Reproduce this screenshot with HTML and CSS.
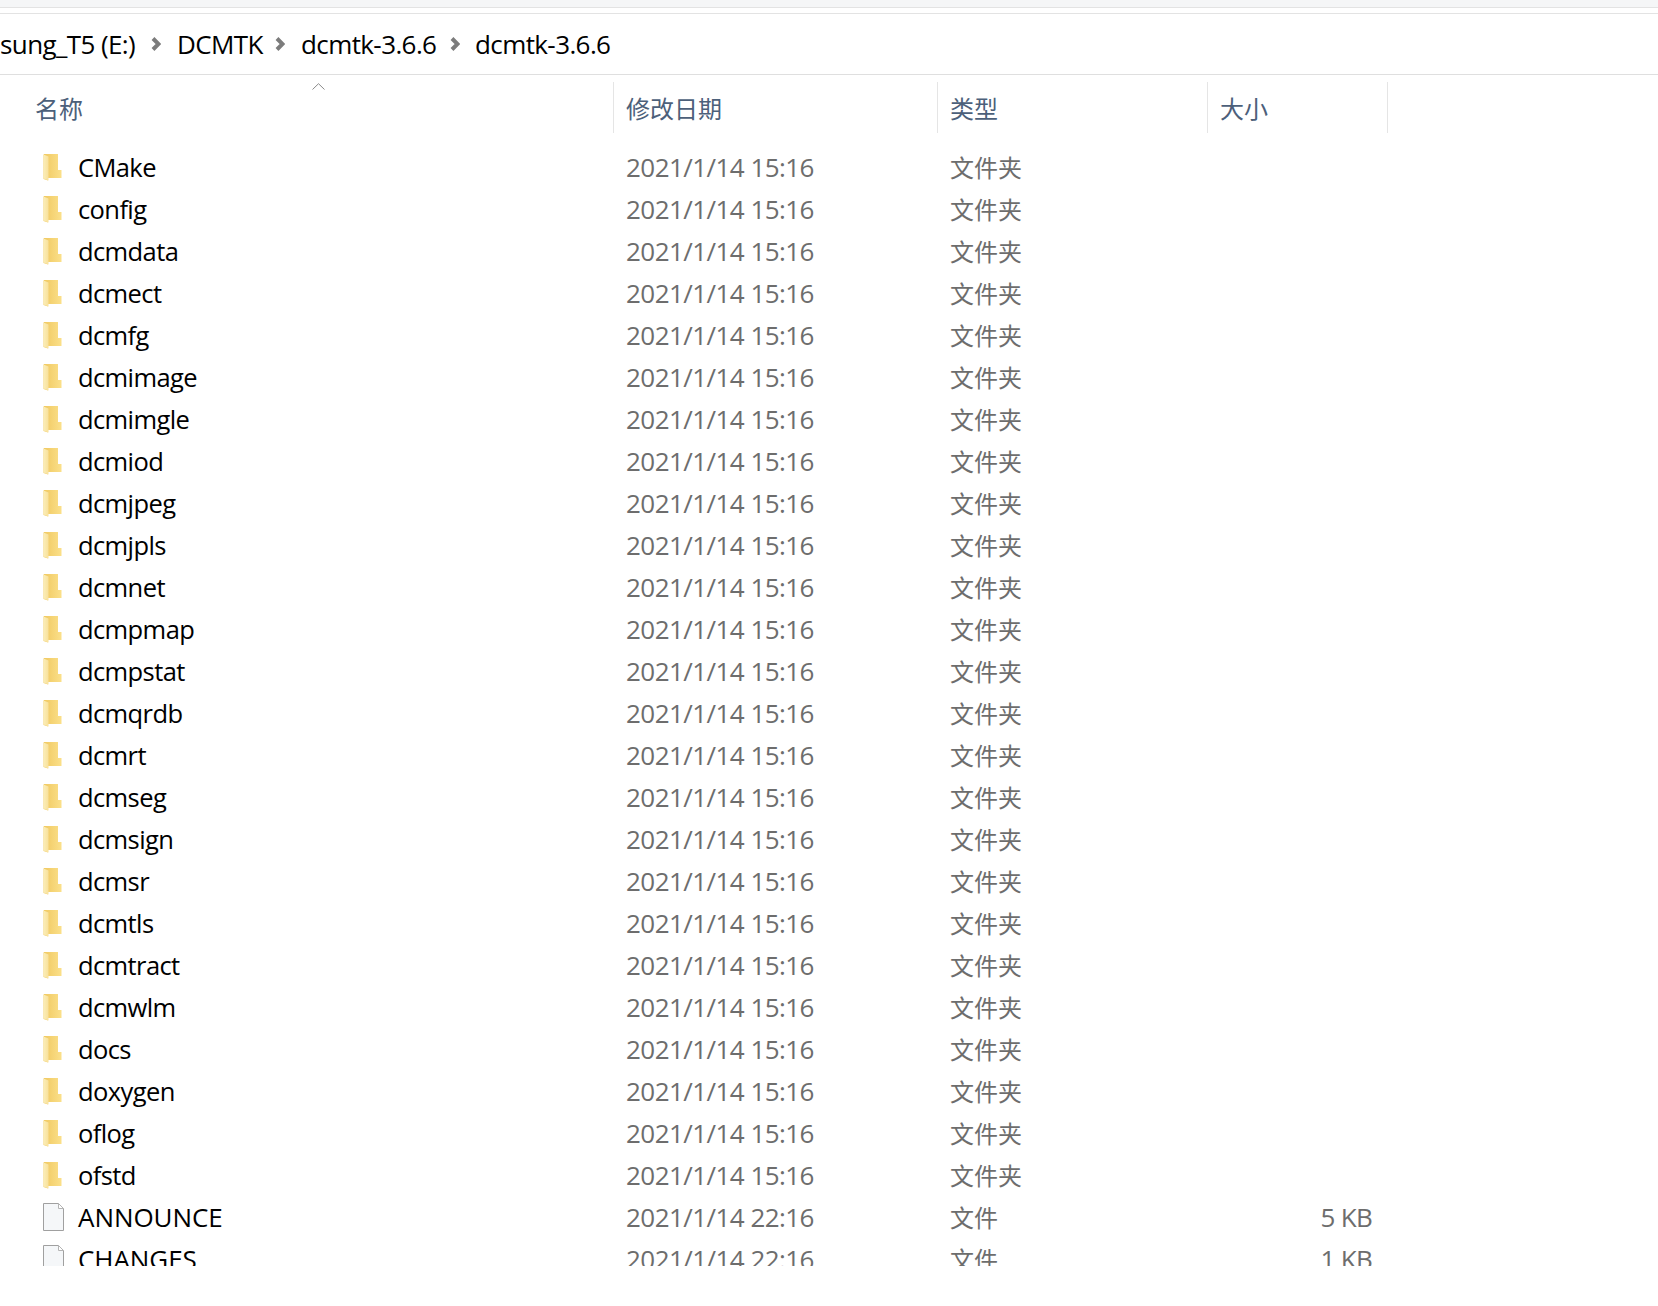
FILE: index.html
```html
<!DOCTYPE html>
<html lang="zh-CN">
<head>
<meta charset="utf-8">
<title>dcmtk-3.6.6</title>
<link rel="stylesheet" href="styles.css">
</head>
<body>
<svg class="defs" width="0" height="0" aria-hidden="true">
  <defs>
    <linearGradient id="fg" x1="0" x2="1" y1="0" y2="0"><stop offset="0" stop-color="#f0c860"/><stop offset="1" stop-color="#fbe08a"/></linearGradient>
    <linearGradient id="fl" x1="0" x2="1" y1="0" y2="0"><stop offset="0" stop-color="#fbeeb8"/><stop offset="1" stop-color="#f8e09a"/></linearGradient>
    <symbol id="folder" viewBox="0 0 19 27">
      <path d="M1 0H15V16H18.500V24H5V26.500L0.500 25V1Z" fill="url(#fg)"/>
      <path d="M0.500 0.500L5.500 2.500V26.500L0.500 24.500Z" fill="url(#fl)"/>
    </symbol>
    <symbol id="file" viewBox="0 0 21 28">
      <path d="M0.500 0.500H15.500L20.500 5.500V27.500H0.500Z" fill="#f5f7f9" stroke="#a0a0a0"/>
      <path d="M15.500 0.500V5.500H20.500Z" fill="#fff" stroke="#b4b4b4"/>
    </symbol>
    <symbol id="chev" viewBox="0 0 10 14">
      <path d="M2 1.500L7.500 7L2 12.500" fill="none" stroke="#7c7c7c" stroke-width="4"/>
    </symbol>
  </defs>
</svg>
<div class="topband"></div>
<nav class="crumbs">
  <span class="crumb c1">sung_T5 (E:)</span><svg class="chev"><use href="#chev"/></svg>
  <span class="crumb c2">DCMTK</span><svg class="chev"><use href="#chev"/></svg>
  <span class="crumb c3">dcmtk-3.6.6</span><svg class="chev"><use href="#chev"/></svg>
  <span class="crumb">dcmtk-3.6.6</span>
</nav>
<div class="cols head">
  <div class="hcell first">名称<svg class="sort" viewBox="0 0 13 7"><path d="M0.500 6.500L6.500 0.700L12.500 6.500" fill="none" stroke="#8a8a8a"/></svg></div>
  <div class="hcell">修改日期</div>
  <div class="hcell">类型</div>
  <div class="hcell">大小</div>
</div>
<main class="list">
<div class="cols row"><div class="name"><svg class="ico"><use href="#folder"/></svg>CMake</div><div class="date">2021/1/14 15:16</div><div class="type">文件夹</div></div>
<div class="cols row"><div class="name"><svg class="ico"><use href="#folder"/></svg>config</div><div class="date">2021/1/14 15:16</div><div class="type">文件夹</div></div>
<div class="cols row"><div class="name"><svg class="ico"><use href="#folder"/></svg>dcmdata</div><div class="date">2021/1/14 15:16</div><div class="type">文件夹</div></div>
<div class="cols row"><div class="name"><svg class="ico"><use href="#folder"/></svg>dcmect</div><div class="date">2021/1/14 15:16</div><div class="type">文件夹</div></div>
<div class="cols row"><div class="name"><svg class="ico"><use href="#folder"/></svg>dcmfg</div><div class="date">2021/1/14 15:16</div><div class="type">文件夹</div></div>
<div class="cols row"><div class="name"><svg class="ico"><use href="#folder"/></svg>dcmimage</div><div class="date">2021/1/14 15:16</div><div class="type">文件夹</div></div>
<div class="cols row"><div class="name"><svg class="ico"><use href="#folder"/></svg>dcmimgle</div><div class="date">2021/1/14 15:16</div><div class="type">文件夹</div></div>
<div class="cols row"><div class="name"><svg class="ico"><use href="#folder"/></svg>dcmiod</div><div class="date">2021/1/14 15:16</div><div class="type">文件夹</div></div>
<div class="cols row"><div class="name"><svg class="ico"><use href="#folder"/></svg>dcmjpeg</div><div class="date">2021/1/14 15:16</div><div class="type">文件夹</div></div>
<div class="cols row"><div class="name"><svg class="ico"><use href="#folder"/></svg>dcmjpls</div><div class="date">2021/1/14 15:16</div><div class="type">文件夹</div></div>
<div class="cols row"><div class="name"><svg class="ico"><use href="#folder"/></svg>dcmnet</div><div class="date">2021/1/14 15:16</div><div class="type">文件夹</div></div>
<div class="cols row"><div class="name"><svg class="ico"><use href="#folder"/></svg>dcmpmap</div><div class="date">2021/1/14 15:16</div><div class="type">文件夹</div></div>
<div class="cols row"><div class="name"><svg class="ico"><use href="#folder"/></svg>dcmpstat</div><div class="date">2021/1/14 15:16</div><div class="type">文件夹</div></div>
<div class="cols row"><div class="name"><svg class="ico"><use href="#folder"/></svg>dcmqrdb</div><div class="date">2021/1/14 15:16</div><div class="type">文件夹</div></div>
<div class="cols row"><div class="name"><svg class="ico"><use href="#folder"/></svg>dcmrt</div><div class="date">2021/1/14 15:16</div><div class="type">文件夹</div></div>
<div class="cols row"><div class="name"><svg class="ico"><use href="#folder"/></svg>dcmseg</div><div class="date">2021/1/14 15:16</div><div class="type">文件夹</div></div>
<div class="cols row"><div class="name"><svg class="ico"><use href="#folder"/></svg>dcmsign</div><div class="date">2021/1/14 15:16</div><div class="type">文件夹</div></div>
<div class="cols row"><div class="name"><svg class="ico"><use href="#folder"/></svg>dcmsr</div><div class="date">2021/1/14 15:16</div><div class="type">文件夹</div></div>
<div class="cols row"><div class="name"><svg class="ico"><use href="#folder"/></svg>dcmtls</div><div class="date">2021/1/14 15:16</div><div class="type">文件夹</div></div>
<div class="cols row"><div class="name"><svg class="ico"><use href="#folder"/></svg>dcmtract</div><div class="date">2021/1/14 15:16</div><div class="type">文件夹</div></div>
<div class="cols row"><div class="name"><svg class="ico"><use href="#folder"/></svg>dcmwlm</div><div class="date">2021/1/14 15:16</div><div class="type">文件夹</div></div>
<div class="cols row"><div class="name"><svg class="ico"><use href="#folder"/></svg>docs</div><div class="date">2021/1/14 15:16</div><div class="type">文件夹</div></div>
<div class="cols row"><div class="name"><svg class="ico"><use href="#folder"/></svg>doxygen</div><div class="date">2021/1/14 15:16</div><div class="type">文件夹</div></div>
<div class="cols row"><div class="name"><svg class="ico"><use href="#folder"/></svg>oflog</div><div class="date">2021/1/14 15:16</div><div class="type">文件夹</div></div>
<div class="cols row"><div class="name"><svg class="ico"><use href="#folder"/></svg>ofstd</div><div class="date">2021/1/14 15:16</div><div class="type">文件夹</div></div>
<div class="cols row"><div class="name caps"><svg class="ico fileico"><use href="#file"/></svg>ANNOUNCE</div><div class="date">2021/1/14 22:16</div><div class="type">文件</div><div class="size">5 KB</div></div>
<div class="cols row"><div class="name caps"><svg class="ico fileico"><use href="#file"/></svg>CHANGES</div><div class="date">2021/1/14 22:16</div><div class="type">文件</div><div class="size">1 KB</div></div>
</main>
</body>
</html>
```

FILE: styles.css
```css
* { box-sizing: border-box; }
html, body { margin: 0; background: #fff; }
body {
  width: 1658px;
  height: 1306px;
  overflow: hidden;
  font-family: "Open Sans", "Noto Sans CJK SC", sans-serif;
  font-size: 26px;
  color: #000;
}
.defs { display: block; height: 0; }
.topband {
  height: 14px;
  background: linear-gradient(#f5f6f7 0, #f5f6f7 7px, #e3e3e3 7px, #e3e3e3 8px, #fff 8px, #fff 13px, #e3e3e3 13px);
}
.crumbs {
  height: 61px;
  border-bottom: 1px solid #dfdfdf;
  display: flex;
  align-items: center;
  white-space: nowrap;
  letter-spacing: -0.6px;
}
.crumb { display: block; }
.c1 { width: 151px; }
.c2 { width: 98px; }
.c3 { width: 149px; }
.chev { width: 10px; height: 14px; margin-right: 16px; flex: none; margin-bottom: 1px; }
.c3 + .chev { margin-right: 15px; }
.cols {
  display: grid;
  grid-template-columns: 614px 324px 270px 180px;
}
.head { height: 51px; margin-top: 7px; }
.hcell {
  font-family: "Noto Sans CJK SC", sans-serif;
  font-size: 24px;
  color: #4c607a;
  padding-left: 12px;
  border-right: 1px solid #e5e5e5;
  line-height: 51px;
}
.hcell.first { padding-left: 35px; position: relative; }
.sort { position: absolute; left: 312px; top: 1px; width: 13px; height: 7px; }
.list {
  height: 1133px;
  padding-top: 12px;
  overflow: hidden;
}
.row { height: 42px; align-items: center; }
.name {
  display: flex;
  align-items: center;
  padding-left: 43px;
  font-size: 25.5px;
  letter-spacing: -0.6px;
  line-height: 44px;
}
.name.caps { font-size: 26px; letter-spacing: -0.05px; }
.ico { width: 19px; height: 27px; margin-right: 16px; flex: none; }
.fileico { width: 21px; height: 28px; margin-right: 14px; }
.date {
  padding-left: 12px;
  color: #6d6d6d;
  letter-spacing: -0.55px;
  line-height: 44px;
}
.type {
  padding-left: 12px;
  color: #6d6d6d;
  font-family: "Noto Sans CJK SC", sans-serif;
  font-size: 24px;
  margin-top: -2px;
}
.size {
  text-align: right;
  padding-right: 16px;
  color: #6d6d6d;
  letter-spacing: -0.7px;
  line-height: 44px;
}
```
